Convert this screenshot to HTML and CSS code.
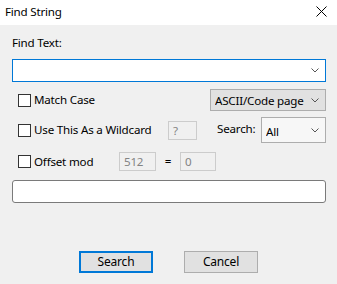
FILE: index.html
```html
<!DOCTYPE html>
<html>
<head>
    <title>Find String</title>
    <link rel="stylesheet" href="styles.css">
</head>
<body>
    <div class="window">
        <div class="titlebar">
            <span class="title">Find String</span>
            <svg class="close" width="11" height="11" viewBox="0 0 11 11">
                <path d="M0.5 0.5 L10.5 10.5 M10.5 0.5 L0.5 10.5" stroke="#000" stroke-width="1" fill="none"/>
            </svg>
        </div>

        <div class="content">
            <div class="field-label">Find Text:</div>
            <div class="combo combo-edit">
                <span class="combo-text"></span>
                <svg class="chevron" width="8" height="5" viewBox="0 0 8 5"><path d="M0.5 0.5 L4 4 L7.5 0.5" stroke="#555" fill="none"/></svg>
            </div>

            <!-- options -->
            <div class="row row-1">
                <label class="check"><span class="box"></span>Match Case</label>
                <div class="combo combo-list combo-code">
                    <span class="combo-text">ASCII/Code page</span>
                    <svg class="chevron" width="8" height="5" viewBox="0 0 8 5"><path d="M0.5 0.5 L4 4 L7.5 0.5" stroke="#555" fill="none"/></svg>
                </div>
            </div>

            <div class="row row-2">
                <label class="check check-wild"><span class="box"></span>Use This As a Wildcard</label>
                <div class="textbox disabled tb-wild">?</div>
                <span class="search-label">Search:</span>
                <div class="combo combo-light combo-all">
                    <span class="combo-text">All</span>
                    <svg class="chevron" width="8" height="5" viewBox="0 0 8 5"><path d="M0.5 0.5 L4 4 L7.5 0.5" stroke="#555" fill="none"/></svg>
                </div>
            </div>

            <div class="row row-3">
                <label class="check check-offset"><span class="box"></span>Offset mod</label>
                <div class="textbox disabled tb-mod">512</div>
                <span class="equals">=</span>
                <div class="textbox disabled tb-eq">0</div>
            </div>

            <div class="result"></div>

            <div class="button-container">
                <button type="button" class="btn default">Search</button>
                <button type="button" class="btn">Cancel</button>
            </div>
        </div>
    </div>
</body>
</html>
```

FILE: styles.css
```css
body {
    margin: 0;
    font-family: "Noto Sans", "Open Sans", sans-serif;
    font-size: 11.6px;
    letter-spacing: -0.2px;
    color: #000;
    background-color: #f0f0f0;
}

.window {
    width: 337px;
    height: 284px;
    overflow: hidden;
}

.titlebar {
    height: 25px;
    background-color: #fff;
    display: flex;
    align-items: center;
    justify-content: space-between;
    padding: 0 10px 0 5px;
}

.title {
    line-height: 16px;
    margin-top: -2px;
}

.close {
    margin-top: -2px;
}

.content {
    padding: 0 11px 0 12px;
}

.field-label {
    line-height: 16px;
    margin-top: 10px;
}

.combo {
    display: flex;
    align-items: center;
    justify-content: space-between;
    box-sizing: border-box;
    padding: 0 6px 0 4px;
}

.combo-text {
    white-space: nowrap;
    overflow: hidden;
}

.combo-edit {
    margin-top: 8px;
    height: 23px;
    border: 1px solid #0078d7;
    background-color: #fff;
}

.combo-list {
    background-color: #e1e1e1;
    border: 1px solid #adadad;
}

.combo-light {
    background-color: #f7f7f7;
    border: 1px solid #adadad;
}

.chevron {
    flex: none;
}

.row {
    display: flex;
    align-items: center;
}

.row-1 {
    margin-top: 7px;
    height: 22px;
}

.row-2 {
    margin-top: 6px;
    height: 26px;
}

.row-3 {
    margin-top: 9px;
    height: 19px;
}

.check {
    display: flex;
    align-items: center;
    padding-left: 6px;
    line-height: 16px;
}

.box {
    width: 11px;
    height: 11px;
    border: 1px solid #333;
    background-color: #fff;
    margin-right: 3px;
}

.check-wild {
    width: 150px;
}

.check-offset {
    width: 101px;
}

.combo-code {
    margin-left: auto;
    width: 116px;
    height: 22px;
}

.combo-all {
    margin-left: auto;
    width: 65px;
    height: 26px;
}

.combo-all .combo-text {
    margin-top: 3px;
}

.textbox {
    box-sizing: border-box;
    height: 19px;
    line-height: 17px;
    padding: 0 4px;
    border: 1px solid #ccc;
    background-color: #f0f0f0;
}

.textbox.disabled {
    color: #838383;
}

.tb-wild {
    width: 29px;
}

.search-label {
    margin-left: 20px;
    line-height: 16px;
    margin-top: -3px;
}

.tb-mod {
    width: 37px;
}

.equals {
    width: 24px;
    text-align: center;
    margin-top: -2px;
}

.tb-eq {
    width: 36px;
}

.result {
    margin-top: 9px;
    height: 23px;
    box-sizing: border-box;
    border: 1px solid #7a7a7a;
    border-radius: 3px;
    background-color: #fff;
}

.button-container {
    display: flex;
    justify-content: center;
    gap: 31px;
    margin-top: 48px;
    padding-right: 1px;
}

.btn {
    width: 74px;
    height: 22px;
    box-sizing: border-box;
    padding: 0 0 2px 0;
    font-family: inherit;
    font-size: 12px;
    letter-spacing: -0.2px;
    color: #000;
    background-color: #e1e1e1;
    border: 1px solid #adadad;
    border-radius: 0;
}

.btn.default {
    border: 2px solid #0078d7;
}
```
